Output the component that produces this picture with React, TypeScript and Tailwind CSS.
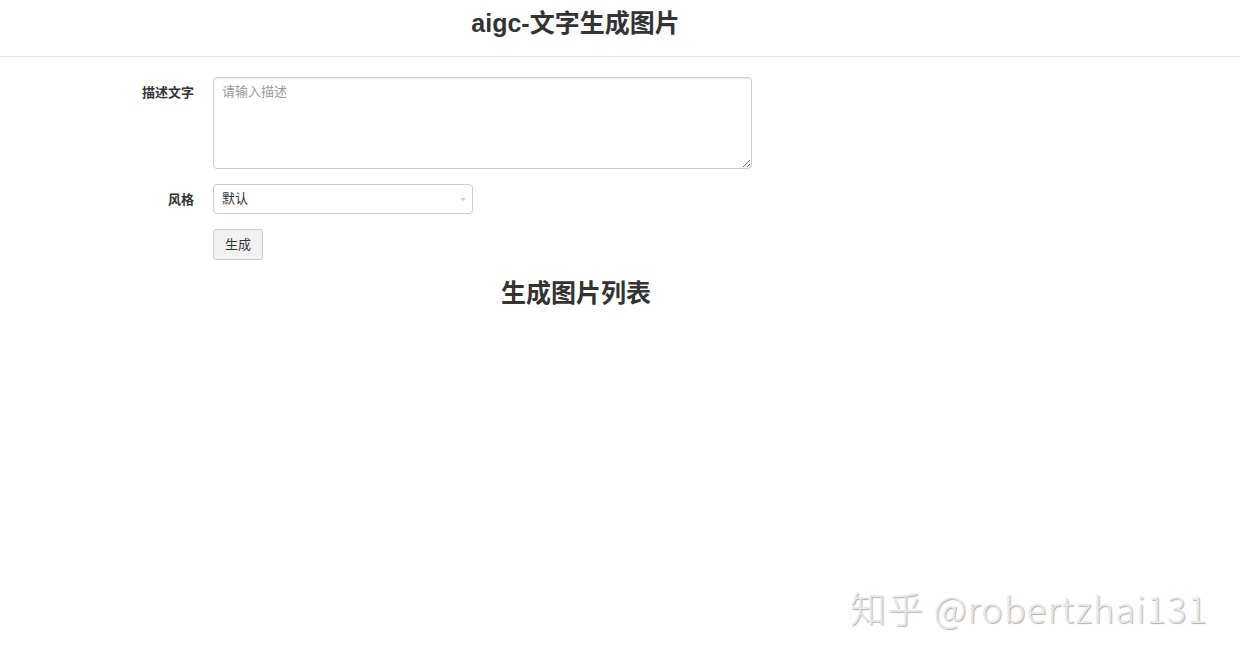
const font = "font-['Helvetica_Neue','Liberation_Sans','Noto_Sans_CJK_SC',sans-serif]";

export default function App() {
  return (
    <div className={`relative h-[656px] w-[1240px] overflow-hidden bg-white text-[#333] ${font}`}>
      <div className="h-[57px] border-b border-[#e5e5e5]">
        <h1 className="w-[1151px] pt-[8px] text-center text-[25px] font-bold leading-[30px]">aigc-文字生成图片</h1>
      </div>

      <div className="flex flex-col gap-[15px] pt-[20px]">
        <div className="flex">
          <label className="w-[194px] pt-[7px] text-right text-[13px] font-bold leading-[17px]">描述文字</label>
          <textarea
            className="ml-[19px] h-[92px] w-[539px] resize-y rounded-[4px] border border-[#ccc] px-[8px] py-[5px] text-[13px] leading-[18px] shadow-[inset_0_1px_1px_rgba(0,0,0,0.075)] outline-none placeholder:text-[#999]"
            placeholder="请输入描述"
          />
        </div>

        <div className="flex items-center">
          <label className="w-[194px] text-right text-[13px] font-bold leading-[17px]">风格</label>
          <div className="relative ml-[19px] flex h-[30px] w-[260px] items-center rounded-[4px] border border-[#ccc] px-[8px] text-[13px]">
            默认
            <span className="absolute right-[6px] top-[13px] h-0 w-0 border-x-[3px] border-t-[3px] border-x-transparent border-t-[#ccc]" />
          </div>
        </div>

        <div className="flex">
          <button className="ml-[213px] h-[31px] w-[50px] rounded-[3px] border border-[#ccc] bg-[#f2f2f2] text-[13px] text-[#333]">
            生成
          </button>
        </div>
      </div>

      <h2 className="mt-[17px] w-[1152px] text-center text-[25px] font-bold leading-[32px]">生成图片列表</h2>

      {/* watermark overlay */}
      <div className="absolute right-[32px] top-[585px] font-['Noto_Sans_CJK_SC',sans-serif] text-[36px] font-light leading-[44px] tracking-[1.2px] text-[#e8e8e8] [text-shadow:1px_1px_1px_#b0b0b0]">
        知乎 @robertzhai131
      </div>
    </div>
  );
}
